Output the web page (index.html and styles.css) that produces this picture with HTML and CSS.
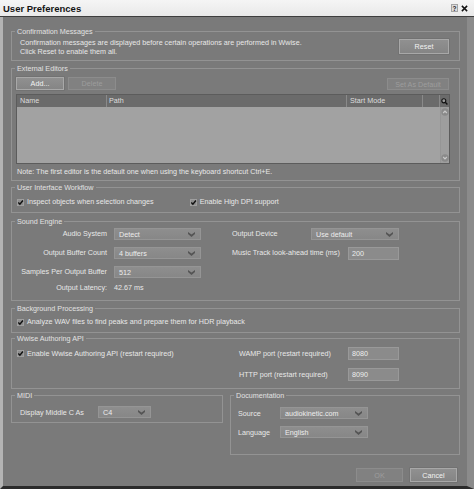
FILE: index.html
```html
<!DOCTYPE html>
<html>
<head>
<meta charset="utf-8">
<title>User Preferences</title>
<link rel="stylesheet" href="styles.css">
</head>
<body>
<div class="window">
  <div class="titlebar">
    <span class="title">User Preferences</span>
    <span class="tb-help">?</span>
    <svg class="tb-close" viewBox="0 0 8 8"><path d="M1 1 L7 7 M7 1 L1 7" stroke="#111" stroke-width="1.7" fill="none"/></svg>
  </div>
  <div class="client">
    <section class="group g-confirm">
      <div class="group-title">Confirmation Messages</div>
      <div class="confirm-body">
        <p class="desc">Confirmation messages are displayed before certain operations are performed in Wwise.<br>Click Reset to enable them all.</p>
        <button class="btn btn-reset">Reset</button>
      </div>
    </section>

    <section class="group g-editors">
      <div class="group-title">External Editors</div>
      <div class="editors-body">
        <div class="btn-row">
          <button class="btn btn-sm">Add...</button>
          <button class="btn btn-sm disabled">Delete</button>
          <span class="spacer"></span>
          <button class="btn btn-default disabled">Set As Default</button>
        </div>
        <div class="table">
          <div class="thead">
            <div class="th c-name">Name</div>
            <div class="th c-path">Path</div>
            <div class="th c-mode">Start Mode</div>
            <div class="th c-extra"></div>
            <div class="th c-scroll">
              <svg class="magnifier" viewBox="0 0 8 8"><circle cx="3.2" cy="3.2" r="2.3" stroke="#111" stroke-width="1.3" fill="#9a9a9a"/><path d="M4.9 4.9 L7.3 7.3" stroke="#111" stroke-width="1.6"/></svg>
            </div>
          </div>
          <div class="tbody">
            <div class="rows"></div>
            <div class="vscroll">
              <svg class="sarrow" viewBox="0 0 8 8"><circle cx="4" cy="4" r="3.7" fill="#8a8a8a"/><path d="M2.2 5 L4 3.1 L5.8 5" stroke="#c9c9c9" stroke-width="1.2" fill="none"/></svg>
              <svg class="sarrow" viewBox="0 0 8 8"><circle cx="4" cy="4" r="3.7" fill="#8a8a8a"/><path d="M2.2 3 L4 4.9 L5.8 3" stroke="#c9c9c9" stroke-width="1.2" fill="none"/></svg>
            </div>
          </div>
        </div>
        <p class="note">Note: The first editor is the default one when using the keyboard shortcut Ctrl+E.</p>
      </div>
    </section>

    <section class="group g-ui">
      <div class="group-title">User Interface Workflow</div>
      <div class="ui-body">
        <label class="check"><svg class="cb" viewBox="0 0 7 7"><rect x="0.5" y="0.5" width="6" height="6" fill="#8d8d8d" stroke="#9f9f9f"/><path d="M1.3 3.5 L2.9 5.2 L5.9 1.5" stroke="#111" stroke-width="1.4" fill="none"/></svg>Inspect objects when selection changes</label>
        <label class="check check-dpi"><svg class="cb" viewBox="0 0 7 7"><rect x="0.5" y="0.5" width="6" height="6" fill="#8d8d8d" stroke="#9f9f9f"/><path d="M1.3 3.5 L2.9 5.2 L5.9 1.5" stroke="#111" stroke-width="1.4" fill="none"/></svg>Enable High DPI support</label>
      </div>
    </section>

    <section class="group g-sound">
      <div class="group-title">Sound Engine</div>
      <div class="sound-grid">
        <span class="lbl-r r1">Audio System</span>
        <div class="combo c1 r1"><span>Detect</span><svg class="arrow" viewBox="0 0 7 5"><path d="M0 0 L3.5 2.6 L7 0 L7 2 L3.5 5 L0 2 Z" fill="#555"/></svg></div>
        <span class="lbl-l r1">Output Device</span>
        <div class="combo c2 r1"><span>Use default</span><svg class="arrow" viewBox="0 0 7 5"><path d="M0 0 L3.5 2.6 L7 0 L7 2 L3.5 5 L0 2 Z" fill="#555"/></svg></div>

        <span class="lbl-r r2">Output Buffer Count</span>
        <div class="combo c1 r2"><span>4 buffers</span><svg class="arrow" viewBox="0 0 7 5"><path d="M0 0 L3.5 2.6 L7 0 L7 2 L3.5 5 L0 2 Z" fill="#555"/></svg></div>
        <span class="lbl-l r2">Music Track look-ahead time (ms)</span>
        <div class="input in-right r2">200</div>

        <span class="lbl-r r3">Samples Per Output Buffer</span>
        <div class="combo c1 r3"><span>512</span><svg class="arrow" viewBox="0 0 7 5"><path d="M0 0 L3.5 2.6 L7 0 L7 2 L3.5 5 L0 2 Z" fill="#555"/></svg></div>

        <span class="lbl-r r4 latency">Output Latency:</span>
        <span class="val r4 latency">42.67 ms</span>
      </div>
    </section>

    <section class="group g-bg">
      <div class="group-title">Background Processing</div>
      <div class="bg-body">
        <label class="check"><svg class="cb" viewBox="0 0 7 7"><rect x="0.5" y="0.5" width="6" height="6" fill="#8d8d8d" stroke="#9f9f9f"/><path d="M1.3 3.5 L2.9 5.2 L5.9 1.5" stroke="#111" stroke-width="1.4" fill="none"/></svg>Analyze WAV files to find peaks and prepare them for HDR playback</label>
      </div>
    </section>

    <section class="group g-api">
      <div class="group-title">Wwise Authoring API</div>
      <div class="api-grid">
        <label class="check api-check"><svg class="cb" viewBox="0 0 7 7"><rect x="0.5" y="0.5" width="6" height="6" fill="#8d8d8d" stroke="#9f9f9f"/><path d="M1.3 3.5 L2.9 5.2 L5.9 1.5" stroke="#111" stroke-width="1.4" fill="none"/></svg>Enable Wwise Authoring API (restart required)</label>
        <span class="api-lbl a1">WAMP port (restart required)</span>
        <div class="input api-in a1">8080</div>
        <span class="api-lbl a2">HTTP port (restart required)</span>
        <div class="input api-in a2">8090</div>
      </div>
    </section>

    <div class="bottom-row">
      <section class="group g-midi">
        <div class="group-title">MIDI</div>
        <div class="midi-body">
          <span class="midi-lbl">Display Middle C As</span>
          <div class="combo combo-midi"><span>C4</span><svg class="arrow" viewBox="0 0 7 5"><path d="M0 0 L3.5 2.6 L7 0 L7 2 L3.5 5 L0 2 Z" fill="#555"/></svg></div>
        </div>
      </section>
      <section class="group g-doc">
        <div class="group-title">Documentation</div>
        <div class="doc-grid">
          <span class="doc-lbl">Source</span>
          <div class="combo combo-doc"><span>audiokinetic.com</span><svg class="arrow" viewBox="0 0 7 5"><path d="M0 0 L3.5 2.6 L7 0 L7 2 L3.5 5 L0 2 Z" fill="#555"/></svg></div>
          <span class="doc-lbl">Language</span>
          <div class="combo combo-doc"><span>English</span><svg class="arrow" viewBox="0 0 7 5"><path d="M0 0 L3.5 2.6 L7 0 L7 2 L3.5 5 L0 2 Z" fill="#555"/></svg></div>
        </div>
      </section>
    </div>

    <div class="footer">
      <button class="btn btn-foot disabled">OK</button>
      <button class="btn btn-foot">Cancel</button>
    </div>
  </div>
</div>
</body>
</html>
```

FILE: styles.css
```css
* { box-sizing: border-box; }
html, body { margin: 0; padding: 0; }
body {
  width: 474px;
  height: 489px;
  overflow: hidden;
  background: #7a7a7a;
  font-family: "Liberation Sans", Arial, sans-serif;
  font-size: 7.2px;
  color: #e8e8e8;
}
p { margin: 0; }

.window {
  width: 474px;
  height: 489px;
  display: flex;
  flex-direction: column;
}

/* title bar */
.titlebar {
  flex: none;
  height: 17px;
  background: linear-gradient(#f5f5f5, #e9e9e9);
  border-bottom: 1px solid #3e3e3e;
  display: flex;
  align-items: center;
  padding: 0 6px 0 3px;
}
.title {
  flex: 1;
  font-weight: bold;
  font-size: 9.5px;
  color: #141414;
}
.tb-help {
  width: 7px;
  height: 8px;
  margin-right: 3px;
  border: 1px solid #a5a5a5;
  background: #dcdcdc;
  color: #222;
  font-size: 6.5px;
  font-weight: bold;
  display: flex;
  align-items: center;
  justify-content: center;
}
.tb-close { width: 7px; height: 7px; }

/* client area */
.client {
  flex: 1;
  display: flex;
  flex-direction: column;
  background: #7a7a7a;
  border-left: 3px solid #b4b4b4;
  border-right: 7px solid #8b8b8b;
  border-bottom: 3px solid #2b2b2b;
  padding: 14px 7px 0 8px;
}

.group {
  flex: none;
  border: 1px solid #939393;
}
.group-title {
  width: fit-content;
  margin: -5px 0 0 3px;
  padding: 0 2px;
  height: 9px;
  line-height: 9px;
  background: #7a7a7a;
  color: #e2e2e2;
  white-space: nowrap;
}

/* buttons */
.btn {
  font-family: inherit;
  font-size: 7.2px;
  color: #f2f2f2;
  background: linear-gradient(#909090, #858585);
  border: 1px solid #a8a8a8;
  box-shadow: 0 0 0 0.5px #6a6a6a;
  padding: 0;
  margin: 0;
  display: flex;
  align-items: center;
  justify-content: center;
  white-space: nowrap;
}
.btn.disabled {
  color: #9d9d9d;
  background: #818181;
  border-color: #8c8c8c;
  box-shadow: none;
}

/* confirmation */
.g-confirm { height: 30px; }
.confirm-body {
  display: flex;
  align-items: flex-start;
  padding: 2px 10px 0 8px;
}
.desc { flex: 1; line-height: 9px; white-space: nowrap; }
.btn-reset { width: 50px; height: 15px; margin-top: 1px; }

/* external editors */
.g-editors { height: 113px; margin-top: 7px; }
.editors-body { padding: 4px 9px 0 4px; }
.btn-row { display: flex; gap: 4px; height: 13px; }
.btn-sm { width: 48px; height: 13px; }
.spacer { flex: 1; }
.btn-default { width: 62px; height: 12px; margin-top: 1px; margin-right: 1px; }

.table {
  margin-top: 4px;
  height: 70px;
  border: 1px solid #5c5c5c;
  display: flex;
  flex-direction: column;
}
.thead {
  height: 12px;
  display: flex;
  background: #6b6b6b;
  color: #dedede;
  line-height: 12px;
}
.th { border-right: 1px solid #8a8a8a; padding-left: 3px; white-space: nowrap; }
.c-name { width: 90px; }
.c-path { width: 240px; padding-left: 2px; }
.c-mode { width: 76px; }
.c-extra { width: 17px; }
.c-scroll { width: 9px; border-right: none; padding: 0; display: flex; align-items: center; justify-content: center; }
.magnifier { width: 7px; height: 7px; }
.tbody { flex: 1; display: flex; background: #a2a2a2; }
.rows { flex: 1; }
.vscroll {
  width: 9px;
  display: flex;
  flex-direction: column;
  justify-content: space-between;
  align-items: center;
  padding: 1px 0;
  background: #9e9e9e;
  border-left: 1px solid #969696;
}
.sarrow { width: 8px; height: 8px; }
.note { margin-top: 3px; padding-left: 1px; line-height: 9px; white-space: nowrap; }

/* ui workflow */
.g-ui { height: 26px; margin-top: 6px; }
.ui-body { display: flex; padding: 5px 6px 0 5px; align-items: center; }
.check { display: flex; align-items: center; gap: 3px; height: 10px; line-height: 10px; white-space: nowrap; }
.cb { width: 7px; height: 7px; flex: none; }
.check-dpi { margin-left: 36px; }

/* sound engine */
.g-sound { height: 80px; margin-top: 8px; }
.sound-grid {
  display: grid;
  grid-template-columns: 102px 87px 31px 79px 88px;
  grid-template-rows: 12px 12px 12px 9px;
  row-gap: 7px;
  padding: 2px 0 0 0;
}
.r1 { grid-row: 1; }
.r2 { grid-row: 2; }
.r3 { grid-row: 3; }
.r4 { grid-row: 4; }
.lbl-r { grid-column: 1; text-align: right; padding-right: 7px; line-height: 12px; white-space: nowrap; }
.lbl-l { grid-column: 4; line-height: 12px; white-space: nowrap; }
.c1 { grid-column: 2; }
.c2 { grid-column: 5; }
.in-right { grid-column: 5; justify-self: end; width: 51px; height: 13px; }
.val { grid-column: 2; }
.latency { line-height: 9px; margin-top: -2px; }

.combo {
  height: 12px;
  display: flex;
  align-items: center;
  justify-content: space-between;
  padding: 0 5px 0 4px;
  background: linear-gradient(#8e8e8e, #878787);
  border: 1px solid #959595;
  color: #ededed;
  white-space: nowrap;
}
.arrow { width: 7px; height: 5px; flex: none; }
.input {
  background: #8b8b8b;
  border: 1px solid #999;
  color: #ededed;
  padding-left: 3px;
  line-height: 11px;
}

/* background processing */
.g-bg { height: 25px; margin-top: 7px; }
.bg-body { padding: 4px 5px 0 5px; display: flex; }

/* authoring api */
.g-api { height: 51px; margin-top: 5px; }
.api-grid {
  display: grid;
  grid-template-columns: 222px 109px 51px;
  grid-template-rows: 13px 13px;
  row-gap: 8px;
  padding: 4px 0 0 5px;
}
.api-check { grid-column: 1; grid-row: 1; align-self: center; }
.api-lbl { grid-column: 2; line-height: 13px; white-space: nowrap; }
.api-in { grid-column: 3; }
.a1 { grid-row: 1; }
.a2 { grid-row: 2; }

/* midi + documentation */
.bottom-row { display: flex; align-items: flex-start; gap: 7px; margin-top: 6px; }
.g-midi { width: 212px; height: 28px; }
.midi-body { display: flex; align-items: center; padding: 6px 0 0 8px; }
.midi-lbl { width: 78px; white-space: nowrap; }
.combo-midi { width: 53px; }
.g-doc { width: 230px; height: 60px; }
.doc-grid {
  display: grid;
  grid-template-columns: 42px 88px;
  grid-template-rows: 12px 12px;
  row-gap: 7px;
  align-items: center;
  padding: 7px 0 0 7px;
}

/* footer */
.footer { display: flex; justify-content: flex-end; gap: 7px; margin-top: 13px; padding-right: 3px; }
.btn-foot { width: 47px; height: 14px; }
```
